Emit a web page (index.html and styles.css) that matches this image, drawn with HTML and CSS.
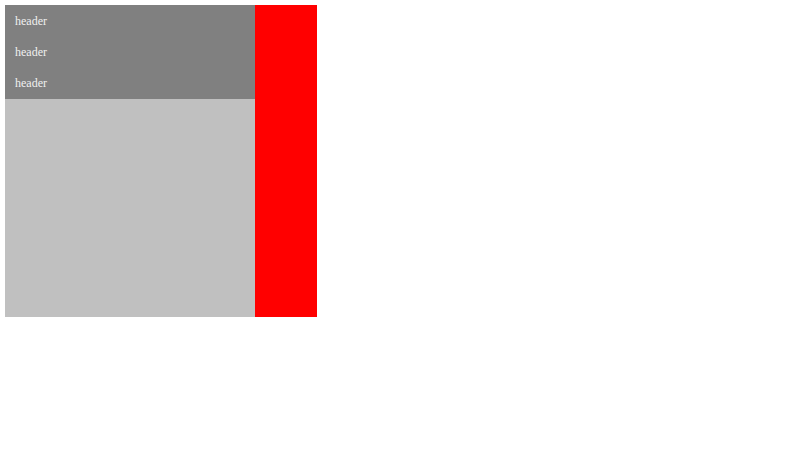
FILE: index.html
```html
<!DOCTYPE html>
<html>
<head>
<meta charset="utf-8">
<link rel="stylesheet" href="styles.css">
</head>
<body>
<div class="wrap">
  <div class="main">
    <div class="headers">
      <div class="header">header</div>
      <div class="header">header</div>
      <div class="header">header</div>
    </div>
    <div class="content"></div>
  </div>
  <div class="side"></div>
</div>
</body>
</html>
```
FILE: styles.css
```css
body {
  margin: 5px;
  font-family: "Liberation Serif", "Times New Roman", serif;
}
.wrap {
  display: flex;
  width: 312px;
  height: 312px;
}
.main {
  width: 250px;
  display: flex;
  flex-direction: column;
  background: #c0c0c0;
}
.headers {
  background: #808080;
  padding-bottom: 1px;
  display: flex;
  flex-direction: column;
}
.header {
  height: 31px;
  box-sizing: border-box;
  display: flex;
  align-items: center;
  padding: 2px 0 0 10px;
  color: #f0f0f0;
  font-size: 12px;
}
.content {
  flex: 1;
}
.side {
  width: 62px;
  background: #ff0000;
}
```
